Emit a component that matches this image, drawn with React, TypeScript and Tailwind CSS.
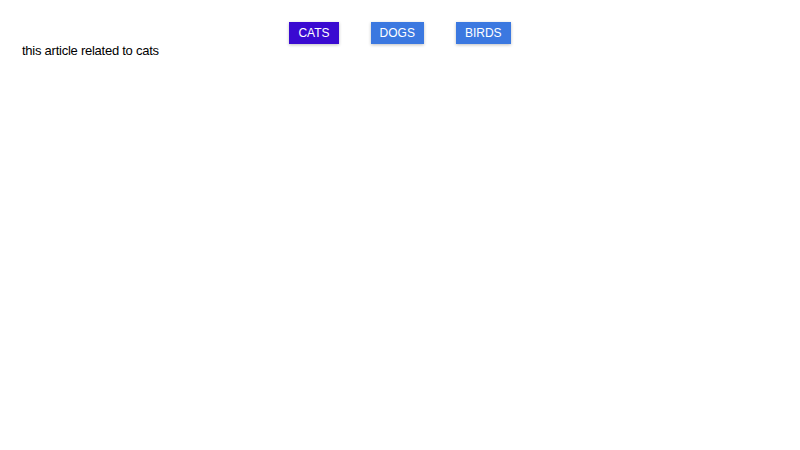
import { useState } from "react";

const tabs = ["CATS", "DOGS", "BIRDS"];

export default function App() {
  const [active, setActive] = useState("CATS");

  return (
    <div className="min-h-[450px] bg-white font-['Liberation_Sans',Arial,sans-serif]">
      <div className="flex justify-center gap-8 pt-[22px]">
        {tabs.map((t) => (
          <button
            key={t}
            onClick={() => setActive(t)}
            className={`h-[22px] px-[9px] text-[12px] leading-[22px] text-white shadow-[0_1px_3px_rgba(0,0,0,0.25)] ${
              active === t ? "bg-[#3a0ad1]" : "bg-[#3b78e0]"
            }`}
          >
            {t}
          </button>
        ))}
      </div>
      <p className="px-[22px] text-[13px] leading-[14px] tracking-[-0.25px] text-black">
        this article related to {active.toLowerCase()}
      </p>
    </div>
  );
}
